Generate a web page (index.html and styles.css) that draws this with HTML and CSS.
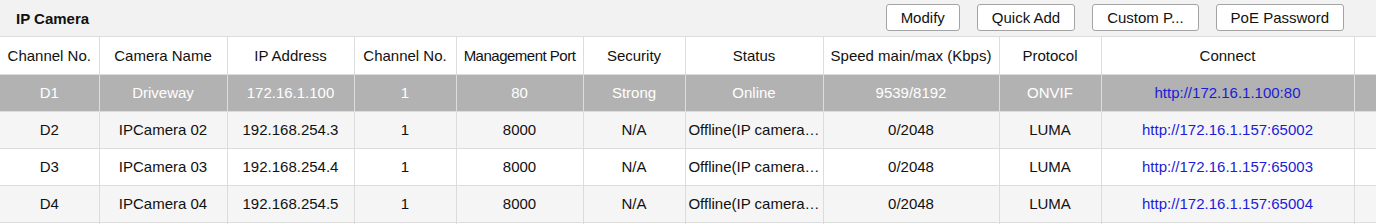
FILE: index.html
```html
<!DOCTYPE html>
<html lang="en">
<head>
    <meta charset="UTF-8">
    <title>IP Camera</title>
    <link rel="stylesheet" href="styles.css">
</head>
<body>
    <div class="panel">
        <div class="toolbar">
            <div class="title">IP Camera</div>
            <div class="actions">
                <button class="btn">Modify</button>
                <button class="btn">Quick Add</button>
                <button class="btn">Custom P...</button>
                <button class="btn">PoE Password</button>
            </div>
        </div>

        <table class="cam-table">
            <colgroup>
                <col style="width:99px">
                <col style="width:128px">
                <col style="width:127px">
                <col style="width:102px">
                <col style="width:127px">
                <col style="width:102px">
                <col style="width:138px">
                <col style="width:176px">
                <col style="width:102px">
                <col style="width:253px">
                <col style="width:22px">
            </colgroup>
            <thead>
                <tr>
                    <th>Channel No.</th>
                    <th>Camera Name</th>
                    <th>IP Address</th>
                    <th>Channel No.</th>
                    <th class="tight">Management Port</th>
                    <th>Security</th>
                    <th>Status</th>
                    <th>Speed main/max (Kbps)</th>
                    <th>Protocol</th>
                    <th>Connect</th>
                    <th></th>
                </tr>
            </thead>
            <tbody>
                <tr class="selected">
                    <td>D1</td>
                    <td>Driveway</td>
                    <td>172.16.1.100</td>
                    <td>1</td>
                    <td>80</td>
                    <td>Strong</td>
                    <td>Online</td>
                    <td>9539/8192</td>
                    <td>ONVIF</td>
                    <td><a href="#" class="link">http://172.16.1.100:80</a></td>
                    <td></td>
                </tr>
                <tr class="alt">
                    <td>D2</td>
                    <td>IPCamera 02</td>
                    <td>192.168.254.3</td>
                    <td>1</td>
                    <td>8000</td>
                    <td>N/A</td>
                    <td>Offline(IP camera…</td>
                    <td>0/2048</td>
                    <td>LUMA</td>
                    <td><a href="#" class="link">http://172.16.1.157:65002</a></td>
                    <td></td>
                </tr>
                <tr>
                    <td>D3</td>
                    <td>IPCamera 03</td>
                    <td>192.168.254.4</td>
                    <td>1</td>
                    <td>8000</td>
                    <td>N/A</td>
                    <td>Offline(IP camera…</td>
                    <td>0/2048</td>
                    <td>LUMA</td>
                    <td><a href="#" class="link">http://172.16.1.157:65003</a></td>
                    <td></td>
                </tr>
                <tr class="alt">
                    <td>D4</td>
                    <td>IPCamera 04</td>
                    <td>192.168.254.5</td>
                    <td>1</td>
                    <td>8000</td>
                    <td>N/A</td>
                    <td>Offline(IP camera…</td>
                    <td>0/2048</td>
                    <td>LUMA</td>
                    <td><a href="#" class="link">http://172.16.1.157:65004</a></td>
                    <td></td>
                </tr>
                <tr>
                    <td></td><td></td><td></td><td></td><td></td><td></td>
                    <td></td><td></td><td></td><td></td><td></td>
                </tr>
            </tbody>
        </table>
    </div>
</body>
</html>
```

FILE: styles.css
```css
body {
    margin: 0;
    padding: 0;
    font-family: 'Liberation Sans', Arial, sans-serif;
    font-size: 15px;
    color: #111;
    background-color: #fff;
}

.panel {
    width: 1376px;
}

.toolbar {
    display: flex;
    justify-content: space-between;
    align-items: center;
    height: 36px;
    background-color: #f2f2f2;
    border-bottom: 1px solid #dcdcdc;
    padding: 0 32px 0 16px;
    box-sizing: content-box;
}

.title {
    font-weight: bold;
    font-size: 15px;
    color: #111;
    padding-top: 1px;
}

.actions {
    display: flex;
    gap: 17px;
    padding-bottom: 1px;
}

.btn {
    height: 27px;
    padding: 0 14px;
    background-color: #fff;
    border: 1px solid #a4a4a4;
    border-radius: 3px;
    font-family: 'Liberation Sans', Arial, sans-serif;
    font-size: 15px;
    color: #111;
    cursor: pointer;
}

.cam-table {
    width: 1376px;
    table-layout: fixed;
    border-collapse: collapse;
}

.cam-table th,
.cam-table td {
    height: 37px;
    padding: 0 2px;
    text-align: center;
    white-space: nowrap;
    overflow: hidden;
    border-right: 1px solid #dcdcdc;
    border-bottom: 1px solid #dcdcdc;
    font-weight: normal;
    box-sizing: border-box;
}

.cam-table th {
    background-color: #fff;
    color: #111;
}

.cam-table th.tight {
    letter-spacing: -0.5px;
}

.cam-table tr.selected td {
    background-color: #b2b2b2;
    color: #fff;
}

.cam-table tr.alt td {
    background-color: #f5f5f5;
}

.link {
    color: #1c1cd8;
    text-decoration: none;
}
```
